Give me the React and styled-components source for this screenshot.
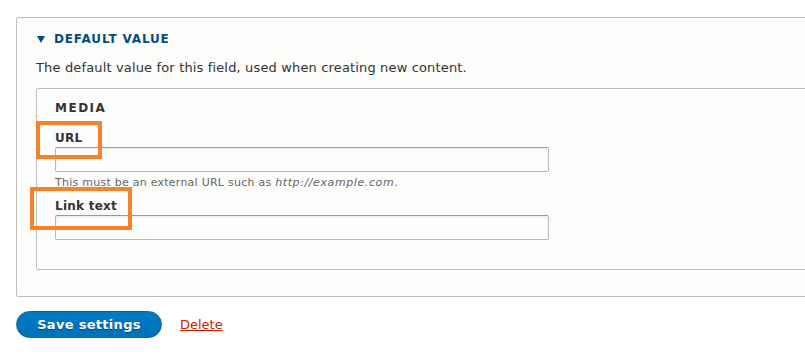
import React from "react";
import styled, { createGlobalStyle } from "styled-components";

const Global = createGlobalStyle`
  html, body { margin: 0; padding: 0; background: #fff; overflow: hidden; }
  body { font-family: "DejaVu Sans", Verdana, sans-serif; color: #333; }
`;

const Page = styled.div`
  box-sizing: border-box;
  width: 805px;
  height: 357px;
  overflow: hidden;
  padding: 17px 0 0 16px;
`;

const Details = styled.section`
  position: relative;
  box-sizing: border-box;
  width: 820px;
  height: 280px;
  border: 1px solid #bfbfba;
  border-radius: 2px;
  background: #fcfcfa;
  padding: 11px 0 0 19px;
`;

const Summary = styled.div`
  display: flex;
  align-items: center;
  gap: 9px;
  height: 20px;
  font-size: 12px;
  font-weight: bold;
  text-transform: uppercase;
  color: #004f80;
  letter-spacing: 0.85px;
`;

const Caret = styled.span`
  width: 0;
  height: 0;
  border-left: 4px solid transparent;
  border-right: 4px solid transparent;
  border-top: 7px solid #004f80;
  margin-left: 1px;
`;

const Description = styled.p`
  margin: 10px 0 0;
  font-size: 13px;
  line-height: 18px;
  letter-spacing: 0.15px;
`;

const Fieldset = styled.div`
  box-sizing: border-box;
  width: 800px;
  height: 182px;
  margin-top: 11px;
  border: 1px solid #bfbfba;
  border-radius: 2px;
  background: #fcfcfa;
  padding: 10px 0 0 18px;
`;

const Legend = styled.div`
  font-size: 12px;
  font-weight: bold;
  letter-spacing: 1.5px;
  text-transform: uppercase;
  line-height: 18px;
  color: #333;
`;

const Item = styled.div`
  position: relative;
  margin-top: ${(p) => p.$top}px;
`;

const Label = styled.label`
  display: block;
  font-size: 12px;
  font-weight: bold;
  line-height: 16px;
  letter-spacing: 0.25px;
  color: #333;
`;

const Input = styled.input`
  display: block;
  box-sizing: border-box;
  width: 494px;
  height: 25px;
  margin-top: 1px;
  border: 1px solid #b8b8b8;
  border-top-color: #999;
  border-radius: 2px;
  background: #fcfcfa;
  box-shadow: inset 0 1px 2px rgba(0, 0, 0, 0.08);
  outline: none;
`;

const Help = styled.div`
  font-size: 11px;
  line-height: 14px;
  color: #666;
  margin-top: 4px;
  letter-spacing: 0.25px;
  em { font-style: italic; letter-spacing: 0.6px; }
`;

const Highlight = styled.span`
  position: absolute;
  box-sizing: border-box;
  border: 4px solid #f8822b;
  left: ${(p) => p.$x}px;
  top: ${(p) => p.$y}px;
  width: ${(p) => p.$w}px;
  height: ${(p) => p.$h}px;
  pointer-events: none;
`;

const Actions = styled.div`
  display: flex;
  align-items: center;
  gap: 18px;
  margin-top: 14px;
`;

const Button = styled.button`
  box-sizing: border-box;
  width: 146px;
  height: 27px;
  border: 1px solid #1e5c90;
  border-radius: 14px;
  background: linear-gradient(#007bc6, #0071b8);
  color: #fff;
  font-family: "DejaVu Sans", Verdana, sans-serif;
  font-size: 13px;
  font-weight: bold;
  letter-spacing: 0.3px;
  text-shadow: 0 1px 1px rgba(0, 0, 0, 0.4);
  padding: 0;
`;

const DeleteLink = styled.a`
  font-size: 13px;
  color: #c72100;
  text-decoration: underline;
  cursor: pointer;
`;

export default function App() {
  return (
    <>
      <Global />
      <Page>
        <Details>
          <Summary>
            <Caret />
            Default value
          </Summary>
          <Description>
            The default value for this field, used when creating new content.
          </Description>
          <Fieldset>
            <Legend>Media</Legend>
            <Item $top={13}>
              <Label>URL</Label>
              <Input type="text" />
              <Help>
                This must be an external URL such as <em>http://example.com</em>.
              </Help>
              <Highlight $x={-19} $y={-9} $w={66} $h={38} />
            </Item>
            <Item $top={8}>
              <Label>Link text</Label>
              <Input type="text" />
              <Highlight $x={-25} $y={-11} $w={102} $h={43} />
            </Item>
          </Fieldset>
        </Details>
        <Actions>
          <Button>Save settings</Button>
          <DeleteLink>Delete</DeleteLink>
        </Actions>
      </Page>
    </>
  );
}
